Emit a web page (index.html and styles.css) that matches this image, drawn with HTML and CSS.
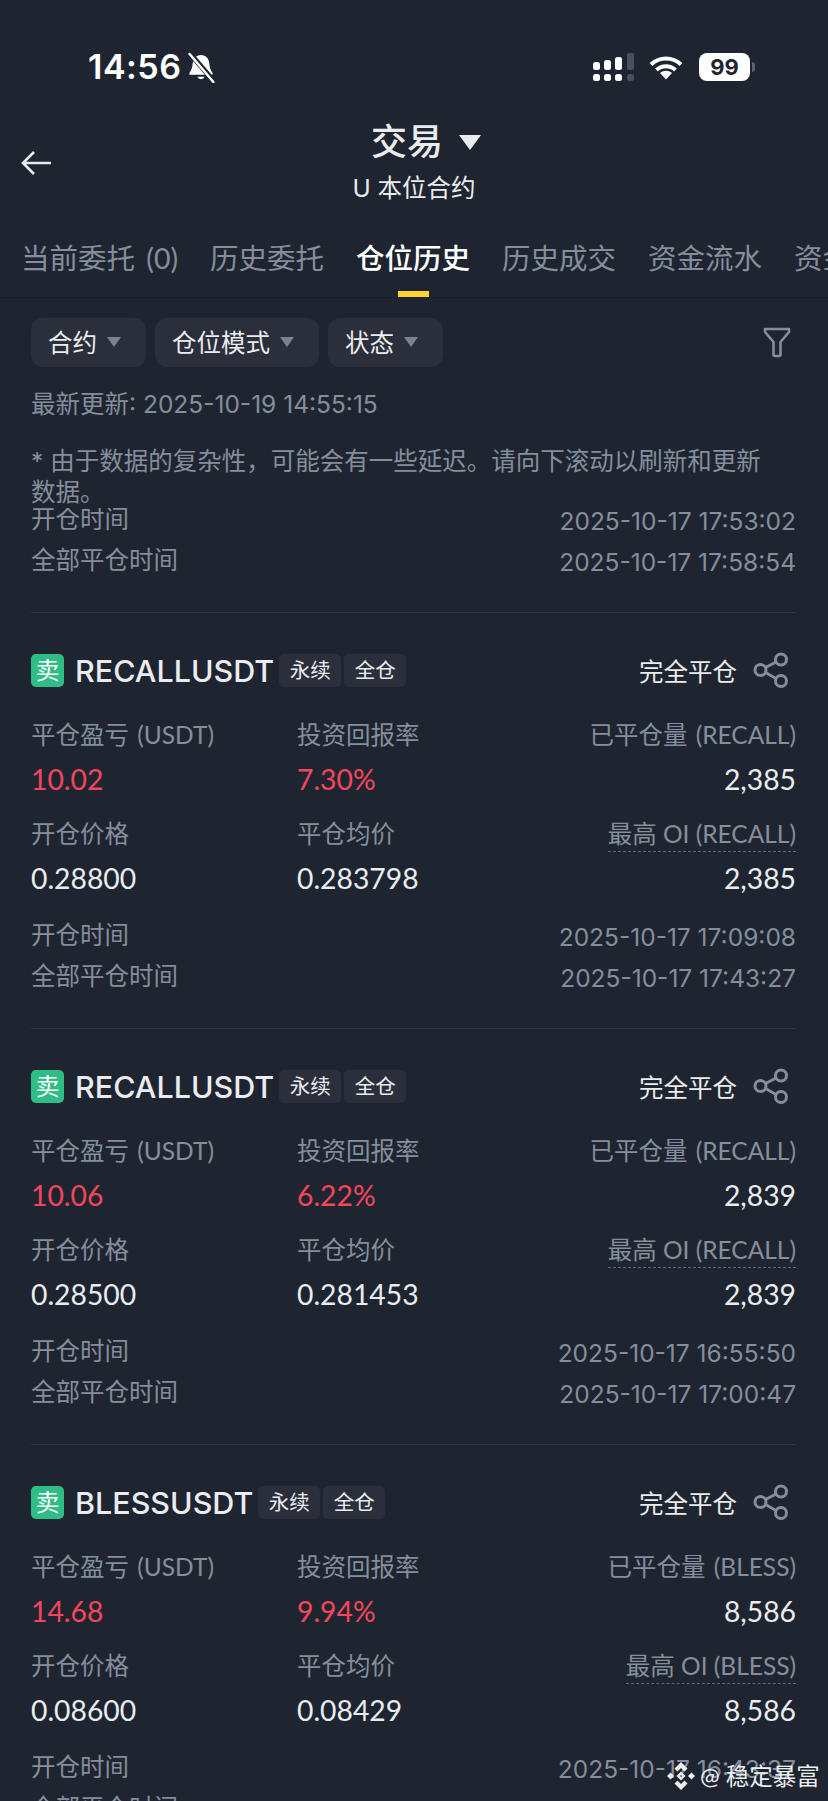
FILE: index.html
```html
<!DOCTYPE html>
<html lang="zh-CN">
<head>
<meta charset="utf-8">
<title>仓位历史</title>
<link rel="stylesheet" href="styles.css">
</head>
<body>
<div class="page">
  <div class="status">
    <div class="status-left">
      <span class="clock">14:56</span>
      <svg class="bell" viewBox="0 0 29 30"><path fill="#fff" d="M14 3c-5 0-7.500 3.500-8 8-.4 4-1 6.500-3 9-.7 1-.3 2 1 2h20c1.300 0 1.700-1 1-2-2-2.500-2.600-5-3-9-.5-4.500-3-8-8-8z"/><path fill="#fff" d="M10.500 24a3.800 3.800 0 0 0 7 0z"/><path stroke="#1f2530" stroke-width="5" d="M3 1l24 28"/><path stroke="#fff" stroke-width="2.400" stroke-linecap="round" d="M3 2l23 27"/></svg>
    </div>
    <div class="status-right">
      <svg class="signal" viewBox="0 0 41 29"><g fill="#fff"><rect x="0" y="9" width="7" height="8" rx="2.500"/><rect x="11" y="7" width="7" height="10" rx="2.500"/><rect x="22" y="4" width="7" height="13" rx="2.500"/><rect x="0" y="21" width="7" height="7" rx="2.500"/><rect x="11" y="21" width="7" height="7" rx="2.500"/><rect x="22" y="21" width="7" height="7" rx="2.500"/></g><g fill="#4b515b"><rect x="34" y="0" width="7" height="17" rx="2"/><rect x="34" y="21" width="7" height="7" rx="2.500"/></g></svg>
      <svg class="wifi" viewBox="0 0 34 25"><path fill="none" stroke="#fff" stroke-width="4" d="M2 9.500C10.500 1.500 23.500 1.500 32 9.500M7.500 15c5.500-5 13.500-5 19 0"/><path fill="#fff" d="M17 24.500l-6-6.500c3.500-3 8.500-3 12 0z"/></svg>
      <div class="battery"><span class="battery-level">99</span><i class="battery-nub"></i></div>
    </div>
  </div>

  <div class="nav">
    <svg class="back" viewBox="0 0 32 26"><path fill="none" stroke="#eaecef" stroke-width="2.600" d="M31 13H3M14 2L3 13l11 11"/></svg>
    <div class="nav-title">
      <div class="title-row"><span class="title">交易</span><i class="title-caret"></i></div>
      <div class="subtitle">U 本位合约</div>
    </div>
  </div>

  <div class="tabs">
    <span class="tab">当前委托 (0)</span>
    <span class="tab">历史委托</span>
    <span class="tab tab-active">仓位历史</span>
    <span class="tab">历史成交</span>
    <span class="tab">资金流水</span>
    <span class="tab">资金费用</span>
  </div>

  <div class="filters">
    <div class="chip">合约<i class="caret"></i></div>
    <div class="chip">仓位模式<i class="caret"></i></div>
    <div class="chip">状态<i class="caret"></i></div>
    <svg class="funnel" viewBox="0 0 28 31"><path fill="none" stroke="#848e9c" stroke-width="2.600" stroke-linejoin="round" d="M2 2h24v3l-8.500 10v12.500a1.500 1.500 0 0 1-1.500 1.500h-4a1.500 1.500 0 0 1-1.500-1.500V15L2 5z"/></svg>
  </div>

  <div class="updated">最新更新: 2025-10-19 14:55:15</div>
  <div class="note">* 由于数据的复杂性，可能会有一些延迟。请向下滚动以刷新和更新数据。</div>

  <div class="list">
    <div class="list-inner">
      <div class="partial">
        <div class="time-row"><span>开仓时间</span><span>2025-10-17 17:53:02</span></div>
        <div class="time-row"><span>全部平仓时间</span><span>2025-10-17 17:58:54</span></div>
      </div>

      <section class="card">
        <div class="card-head">
          <span class="side">卖</span><span class="symbol">RECALLUSDT</span><span class="tag">永续</span><span class="tag">全仓</span>
          <span class="state">完全平仓</span>
          <svg class="share" viewBox="0 0 36 36"><g fill="none" stroke="#848e9c" stroke-width="3"><circle cx="28" cy="7.500" r="5.500"/><circle cx="7.500" cy="18" r="5.500"/><circle cx="28" cy="29" r="5.500"/><path d="M12.500 15.500L23 10M12.500 20.500L23 26.500"/></g></svg>
        </div>
        <div class="stats">
          <div class="stat"><span class="label">平仓盈亏 (USDT)</span><span class="value red">10.02</span></div>
          <div class="stat"><span class="label">投资回报率</span><span class="value red">7.30%</span></div>
          <div class="stat right"><span class="label">已平仓量 (RECALL)</span><span class="value">2,385</span></div>
          <div class="stat"><span class="label">开仓价格</span><span class="value">0.28800</span></div>
          <div class="stat"><span class="label">平仓均价</span><span class="value">0.283798</span></div>
          <div class="stat right"><span class="label dotted">最高 OI (RECALL)</span><span class="value">2,385</span></div>
        </div>
        <div class="times">
          <div class="time-row"><span>开仓时间</span><span>2025-10-17 17:09:08</span></div>
          <div class="time-row"><span>全部平仓时间</span><span>2025-10-17 17:43:27</span></div>
        </div>
      </section>

      <section class="card">
        <div class="card-head">
          <span class="side">卖</span><span class="symbol">RECALLUSDT</span><span class="tag">永续</span><span class="tag">全仓</span>
          <span class="state">完全平仓</span>
          <svg class="share" viewBox="0 0 36 36"><g fill="none" stroke="#848e9c" stroke-width="3"><circle cx="28" cy="7.500" r="5.500"/><circle cx="7.500" cy="18" r="5.500"/><circle cx="28" cy="29" r="5.500"/><path d="M12.500 15.500L23 10M12.500 20.500L23 26.500"/></g></svg>
        </div>
        <div class="stats">
          <div class="stat"><span class="label">平仓盈亏 (USDT)</span><span class="value red">10.06</span></div>
          <div class="stat"><span class="label">投资回报率</span><span class="value red">6.22%</span></div>
          <div class="stat right"><span class="label">已平仓量 (RECALL)</span><span class="value">2,839</span></div>
          <div class="stat"><span class="label">开仓价格</span><span class="value">0.28500</span></div>
          <div class="stat"><span class="label">平仓均价</span><span class="value">0.281453</span></div>
          <div class="stat right"><span class="label dotted">最高 OI (RECALL)</span><span class="value">2,839</span></div>
        </div>
        <div class="times">
          <div class="time-row"><span>开仓时间</span><span>2025-10-17 16:55:50</span></div>
          <div class="time-row"><span>全部平仓时间</span><span>2025-10-17 17:00:47</span></div>
        </div>
      </section>

      <section class="card">
        <div class="card-head">
          <span class="side">卖</span><span class="symbol">BLESSUSDT</span><span class="tag">永续</span><span class="tag">全仓</span>
          <span class="state">完全平仓</span>
          <svg class="share" viewBox="0 0 36 36"><g fill="none" stroke="#848e9c" stroke-width="3"><circle cx="28" cy="7.500" r="5.500"/><circle cx="7.500" cy="18" r="5.500"/><circle cx="28" cy="29" r="5.500"/><path d="M12.500 15.500L23 10M12.500 20.500L23 26.500"/></g></svg>
        </div>
        <div class="stats">
          <div class="stat"><span class="label">平仓盈亏 (USDT)</span><span class="value red">14.68</span></div>
          <div class="stat"><span class="label">投资回报率</span><span class="value red">9.94%</span></div>
          <div class="stat right"><span class="label">已平仓量 (BLESS)</span><span class="value">8,586</span></div>
          <div class="stat"><span class="label">开仓价格</span><span class="value">0.08600</span></div>
          <div class="stat"><span class="label">平仓均价</span><span class="value">0.08429</span></div>
          <div class="stat right"><span class="label dotted">最高 OI (BLESS)</span><span class="value">8,586</span></div>
        </div>
        <div class="times">
          <div class="time-row"><span>开仓时间</span><span>2025-10-17 16:43:37</span></div>
          <div class="time-row"><span>全部平仓时间</span><span>2025-10-17 16:50:12</span></div>
        </div>
      </section>
    </div>
  </div>

  <div class="watermark">
    <svg class="wm-logo" viewBox="0 0 28 28"><g fill="#eceef0"><path d="M14 0l6.500 6.500-3 3L14 6l-3.500 3.500-3-3z"/><path d="M14 28l6.500-6.500-3-3L14 22l-3.500-3.500-3 3z"/><path d="M3.500 10.500L7 14l-3.500 3.500L0 14z"/><path d="M24.500 10.500L28 14l-3.500 3.500L21 14z"/><path fill-rule="evenodd" d="M14 9.500l4.500 4.500-4.500 4.500L9.500 14zM14 12.500L12.500 14l1.500 1.500 1.500-1.500z"/></g></svg>
    <span class="wm-text">@ 稳定暴富</span>
  </div>
</div>
</body>
</html>
```
FILE: styles.css
```css
* { box-sizing: border-box; margin: 0; padding: 0; }
html, body { width: 828px; height: 1801px; overflow: hidden; background: #1f2530; }
body { font-family: "Inter", "Noto Sans CJK SC", sans-serif; color: #eaecef; }

.page { position: relative; width: 828px; height: 1801px; display: flex; flex-direction: column; overflow: hidden; }

/* status bar */
.status { height: 120px; padding: 47px 78px 0 88px; display: flex; justify-content: space-between; align-items: flex-start; flex: none; }
.status-left { display: flex; align-items: center; gap: 4px; height: 40px; }
.clock { font-size: 34px; font-weight: 600; color: #fff; line-height: 40px; letter-spacing: 0.5px; }
.bell { width: 31px; height: 31px; }
.status-right { display: flex; align-items: center; height: 40px; }
.signal { width: 41px; height: 29px; }
.wifi { width: 34px; height: 25px; margin-left: 15px; }
.battery { position: relative; width: 51px; height: 28px; margin-left: 16px; background: #fff; border-radius: 8px; display: flex; align-items: center; justify-content: center; }
.battery-level { font-size: 22px; font-weight: 700; color: #1f2530; line-height: 1; }
.battery-nub { position: absolute; left: 53px; top: 9px; width: 3px; height: 10px; background: #5b616b; border-radius: 0 3px 3px 0; }

/* nav */
.nav { position: relative; height: 86px; flex: none; display: flex; justify-content: center; }
.back { position: absolute; left: 20px; top: 30px; width: 32px; height: 26px; }
.nav-title { display: flex; flex-direction: column; align-items: center; }
.title-row { display: flex; align-items: center; height: 44px; gap: 16px; padding-left: 24px; }
.title { font-size: 36px; font-weight: 500; line-height: 44px; }
.title-caret { width: 0; height: 0; border-left: 11px solid transparent; border-right: 11px solid transparent; border-top: 15px solid #eaecef; }
.subtitle { margin-top: 8px; font-size: 24.5px; line-height: 32px; }

/* tabs */
.tabs { height: 92px; flex: none; padding: 33px 0 0 21px; display: flex; gap: 32px; overflow: hidden; border-bottom: 1px solid #191e27; white-space: nowrap; }
.tab { position: relative; flex: none; font-family: "Lato", "Noto Sans CJK SC", sans-serif; font-size: 28.5px; line-height: 38px; color: #848e9c; word-spacing: 4px; }
.tab-active { color: #fff; font-weight: 500; }
.tab-active::after { content: ""; position: absolute; left: 42px; top: 52px; width: 31px; height: 6px; background: #fcd535; }

/* filters */
.filters { flex: none; display: flex; align-items: center; gap: 9px; margin-top: 20px; padding: 0 32px 0 31px; height: 49px; }
.chip { height: 49px; padding: 0 25px 2px 17px; display: flex; align-items: center; gap: 10px; background: #2a2f3b; border-radius: 12px; font-size: 24.5px; color: #eaecef; }
.caret { width: 0; height: 0; border-left: 7.500px solid transparent; border-right: 7.500px solid transparent; border-top: 10px solid #7d828c; }
.funnel { margin-left: auto; margin-right: 5px; width: 28px; height: 31px; }

/* info */
.updated { flex: none; margin-top: 21px; padding: 0 32px 0 31px; font-size: 24.5px; line-height: 32px; color: #848e9c; }
.note { flex: none; margin-top: 26px; padding: 0 50px 0 31px; font-size: 24.5px; line-height: 31px; color: #848e9c; }

/* list */
.list { flex: 1; min-height: 0; overflow: hidden; }
.list-inner { margin-top: -9px; }
.partial { padding: 0 32px 31px 31px; }
.time-row { display: flex; justify-content: space-between; align-items: center; height: 40px; margin-bottom: 1px; font-size: 24.5px; color: #848e9c; }
.time-row span:first-child { margin-bottom: 3px; }
.time-row span:last-child { margin-top: 3px; font-size: 24.5px; }
.card { margin: 0 32px 0 31px; padding: 39px 0 32px; border-top: 1px solid #2f3541; height: 416px; }

.card-head { height: 36px; display: flex; align-items: center; }
.side { width: 33px; height: 33px; border-radius: 5px; background: #2ebd85; color: #fff; font-size: 24px; line-height: 33px; text-align: center; flex: none; }
.symbol { margin-left: 11px; font-size: 30.5px; font-weight: 500; color: #eaecef; }
.tag { margin-left: 5px; height: 33px; width: 62px; border-radius: 5px; background: #2a2f3b; font-size: 20.5px; line-height: 33px; text-align: center; color: #eaecef; flex: none; }
.tag + .tag { margin-left: 3px; }
.state { margin-left: auto; font-size: 24.5px; color: #eaecef; }
.share { margin-left: 16px; width: 36px; height: 36px; margin-right: 7px; flex: none; }

.stats { margin-top: 32px; display: grid; grid-template-columns: 266px 1fr auto; row-gap: 25px; font-family: "Lato", "Noto Sans CJK SC", sans-serif; }
.stat { display: flex; flex-direction: column; gap: 14px; align-items: flex-start; }
.stat.right { align-items: flex-end; }
.label { font-size: 24.5px; line-height: 30px; color: #848e9c; word-spacing: 2px; }
.dotted { position: relative; word-spacing: 0; }
.dotted::after { content: ""; position: absolute; left: 0; right: 0; bottom: -3px; border-bottom: 1px dashed #5f6672; }
.value { font-size: 28.3px; line-height: 30px; color: #eaecef; }
.red { color: #f6465d; }
.times { margin-top: 22px; }

/* watermark */
.watermark { position: absolute; left: 667px; top: 1760px; display: flex; align-items: center; gap: 5px; }
.wm-logo { width: 28px; height: 28px; flex: none; }
.wm-text { font-family: "Lato", "Noto Sans CJK SC", sans-serif; font-size: 23.5px; line-height: 32px; color: #eceef0; white-space: nowrap; }
```
